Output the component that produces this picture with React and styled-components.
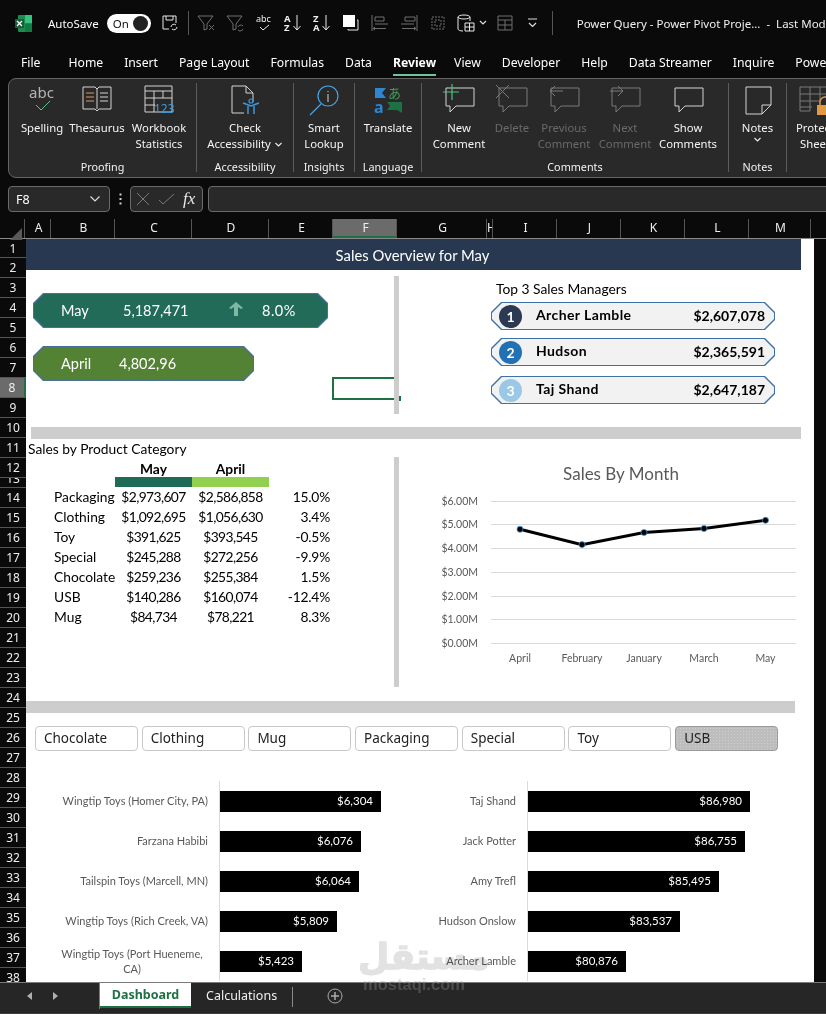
import React from "react";
import styled, { createGlobalStyle } from "styled-components";

const GlobalStyle = createGlobalStyle`
  html, body { margin: 0; padding: 0; background: #0a0a0a; }
  * { box-sizing: border-box; }
`;

const columns = [
  ["A", 26], ["B", 64], ["C", 77], ["D", 77], ["E", 64], ["F", 64], ["G", 90],
  ["H", 6], ["I", 64], ["J", 64], ["K", 64], ["L", 64], ["M", 62],
];

const rowHeights = [19, 20, 20, 20, 20, 20, 20, 20, 20, 20, 20, 20, 10, 20, 20, 20, 20, 20, 20, 20, 20, 20, 20, 20, 20, 20, 20, 20, 20, 20, 20, 20, 20, 20, 20, 20, 20, 20];

const tabs = ["File", "Home", "Insert", "Page Layout", "Formulas", "Data", "Review", "View", "Developer", "Help", "Data Streamer", "Inquire", "Power Pivot"];

const categories = [
  ["Packaging", "$2,973,607", "$2,586,858", "15.0%"],
  ["Clothing", "$1,092,695", "$1,056,630", "3.4%"],
  ["Toy", "$391,625", "$393,545", "-0.5%"],
  ["Special", "$245,288", "$272,256", "-9.9%"],
  ["Chocolate", "$259,236", "$255,384", "1.5%"],
  ["USB", "$140,286", "$160,074", "-12.4%"],
  ["Mug", "$84,734", "$78,221", "8.3%"],
];

const managers = [
  { n: 1, name: "Archer Lamble", value: "$2,607,078", color: "#2b3a52", mb: 8 },
  { n: 2, name: "Hudson", value: "$2,365,591", color: "#2271b5", mb: 10 },
  { n: 3, name: "Taj Shand", value: "$2,647,187", color: "#9cc8e8", mb: 0 },
];

const slicers = ["Chocolate", "Clothing", "Mug", "Packaging", "Special", "Toy", "USB"];

const customers = [
  ["Wingtip Toys (Homer City, PA)", 161, "$6,304"],
  ["Farzana Habibi", 141, "$6,076"],
  ["Tailspin Toys (Marcell, MN)", 139, "$6,064"],
  ["Wingtip Toys (Rich Creek, VA)", 117, "$5,809"],
  ["Wingtip Toys (Port Hueneme, CA)", 82, "$5,423"],
];

const people = [
  ["Taj Shand", 222, "$86,980"],
  ["Jack Potter", 217, "$86,755"],
  ["Amy Trefl", 191, "$85,495"],
  ["Hudson Onslow", 152, "$83,537"],
  ["Archer Lamble", 98, "$80,876"],
];

const months = [
  ["April", 520, 529.3],
  ["February", 582, 544.6],
  ["January", 644, 532.5],
  ["March", 704, 528.5],
  ["May", 765.5, 520.3],
];

const gridLines = [
  ["$6.00M", 501.5], ["$5.00M", 524.5], ["$4.00M", 548.5], ["$3.00M", 572.5],
  ["$2.00M", 596.5], ["$1.00M", 619.5], ["$0.00M", 643.5],
];

const Page = styled.div`
  position: relative;
  width: 826px;
  height: 1014px;
  overflow: hidden;
  display: flex;
  flex-direction: column;
  background: #0a0a0a;
  color: #fff;
  font-family: "Noto Sans", "Open Sans", sans-serif;
`;

const TitleBar = styled.div`
  height: 46px;
  flex: none;
  display: flex;
  align-items: center;
  padding-left: 15px;
  font-size: 12px;
  white-space: nowrap;
  svg { flex: none; }
`;

const AutoSaveLabel = styled.span`
  margin-left: 16px;
  flex: none;
  font-size: 11.5px;
`;

const Toggle = styled.div`
  width: 44px;
  height: 19px;
  margin-left: 8px;
  margin-right: 5px;
  padding: 0 3px 0 6px;
  flex: none;
  border-radius: 10px;
  background: #fff;
  color: #111;
  display: flex;
  align-items: center;
  justify-content: space-between;
  font-size: 11.5px;
`;

const ToggleKnob = styled.i`
  width: 15px;
  height: 15px;
  border-radius: 50%;
  background: #222;
`;

const QuickSlot = styled.div`
  width: ${(p) => p.$w || 29}px;
  height: 20px;
  display: flex;
  align-items: center;
  justify-content: center;
  flex: none;
`;

const TitleDivider = styled.i`
  width: 1px;
  height: 24px;
  flex: none;
  margin: 0 ${(p) => p.$gap || 4}px;
  background: #555;
`;

const DocTitle = styled.span`
  margin-left: 17px;
  flex: none;
  font-size: 11.5px;
  color: #f0f0f0;
`;

const TabBar = styled.div`
  height: 32px;
  flex: none;
  display: flex;
  gap: 21px;
  padding: 7px 0 0 21px;
  font-size: 12.2px;
  white-space: nowrap;
`;

const Tab = styled.div`
  line-height: 20px;
  flex: none;
  font-weight: ${(p) => (p.$active ? 700 : 400)};
  margin-right: ${(p) => (p.$first ? 7 : p.$active ? -3 : 0)}px;
  border-bottom: ${(p) => (p.$active ? "2px solid #6fc39a" : "none")};
  height: ${(p) => (p.$active ? 23 : 20)}px;
`;

const Ribbon = styled.div`
  height: 100px;
  margin-left: 8px;
  width: 840px;
  flex: none;
  display: flex;
  background: #292929;
  border: 1px solid #666;
  border-radius: 8px;
`;

const Group = styled.div`
  width: ${(p) => p.$w}px;
  flex: none;
  display: flex;
  flex-direction: column;
`;

const GroupButtons = styled.div`
  flex: 1;
  display: flex;
  padding-left: ${(p) => p.$pad || 0}px;
`;

const GroupLabel = styled.div`
  height: 19px;
  line-height: 17px;
  text-align: center;
  font-size: 10.8px;
  color: #f2f2f2;
`;

const GroupDivider = styled.i`
  width: 1px;
  flex: none;
  margin: 4px 0 5px;
  background: #5c5c5c;
`;

const RibbonButton = styled.div`
  width: ${(p) => p.$w}px;
  flex: none;
  display: flex;
  flex-direction: column;
  align-items: center;
  padding-top: 5px;
  text-align: center;
  font-size: 11.3px;
  line-height: 16px;
  white-space: nowrap;
  color: ${(p) => (p.$off ? "#6a6a6a" : "#f4f4f4")};
`;

const RibbonIcon = styled.div`
  height: 36px;
  display: flex;
  align-items: flex-start;
  justify-content: center;
`;

const FormulaRow = styled.div`
  height: 26px;
  margin-top: 8px;
  margin-left: 8px;
  width: 860px;
  display: flex;
  align-items: stretch;
  flex: none;
`;

const NameBox = styled.div`
  width: 102px;
  padding: 0 8px 0 7px;
  display: flex;
  align-items: center;
  justify-content: space-between;
  font-size: 12.5px;
  background: #292929;
  border: 1px solid #6a6a6a;
  border-radius: 4px;
`;

const Dots = styled.div`
  width: 20px;
  display: flex;
  align-items: center;
  justify-content: center;
`;

const FxBox = styled.div`
  width: 73px;
  display: flex;
  align-items: center;
  gap: 7px;
  padding-left: 5px;
  background: #292929;
  border: 1px solid #6a6a6a;
  border-radius: 4px;
`;

const FormulaInput = styled.div`
  flex: 1;
  margin-left: 5px;
  background: #292929;
  border: 1px solid #6a6a6a;
  border-radius: 4px;
`;

const ColumnBar = styled.div`
  height: 20px;
  margin-top: 7px;
  display: flex;
  flex: none;
  border-bottom: 1px solid #8a8a8a;
`;

const Corner = styled.div`
  width: 25px;
  flex: none;
  padding: 4px 0 0 10px;
  border-right: 1px solid #555;
`;

const ColumnCell = styled.div`
  width: ${(p) => p.$w}px;
  flex: none;
  overflow: hidden;
  padding-left: ${(p) => (p.$w > 6 ? 2 : 0)}px;
  text-align: center;
  font-size: 12px;
  line-height: 18px;
  color: #eee;
  border-right: 1px solid #555;
  background: ${(p) => (p.$selected ? "#6b6b6b" : "transparent")};
  border-bottom: ${(p) => (p.$selected ? "2px solid #1e7145" : "none")};
`;

const SheetArea = styled.div`
  height: 743px;
  display: flex;
  flex: none;
  overflow: hidden;
`;

const RowBar = styled.div`
  width: 26px;
  flex: none;
`;

const RowCell = styled.div`
  height: ${(p) => p.$h}px;
  overflow: hidden;
  text-align: center;
  font-size: 12px;
  line-height: ${(p) => (p.$h > 10 ? 19 : 2)}px;
  color: #eee;
  border-bottom: 1px solid #555;
  background: ${(p) => (p.$selected ? "#6b6b6b" : "transparent")};
  border-right: ${(p) => (p.$selected ? "2px solid #1e7145" : "none")};
`;

const Canvas = styled.div`
  position: relative;
  width: 788px;
  flex: none;
  background: #fff;
  color: #000;
  font-family: Lato, "Liberation Sans", sans-serif;
  font-size: 13.8px;
`;

const Banner = styled.div`
  width: 775px;
  height: 31px;
  padding-right: 2px;
  display: flex;
  align-items: center;
  justify-content: center;
  background: #283850;
  color: #fff;
  font-size: 14.8px;
`;

const TopSection = styled.div`
  height: 157px;
  display: flex;
`;

const KpiColumn = styled.div`
  width: 368px;
  flex: none;
  padding: 23px 0 0 7px;
  display: flex;
  flex-direction: column;
  gap: 18px;
`;

const snip = "polygon(10px 0, calc(100% - 10px) 0, 100% 10px, 100% calc(100% - 10px), calc(100% - 10px) 100%, 10px 100%, 0 calc(100% - 10px), 0 10px)";

const KpiFrame = styled.div`
  width: ${(p) => p.$w}px;
  height: 35px;
  padding: 1px;
  background: #4a6f9a;
  clip-path: ${snip};
`;

const KpiBody = styled.div`
  height: 100%;
  padding-left: 27px;
  display: flex;
  align-items: center;
  background: ${(p) => p.$bg};
  color: #fff;
  font-size: 14.5px;
  clip-path: ${snip};
`;

const KpiText = styled.span`
  width: ${(p) => p.$w}px;
  flex: none;
`;

const KpiPercent = styled.span`
  flex: none;
  letter-spacing: 0.5px;
`;

const VerticalRule = styled.div`
  position: relative;
  z-index: 1;
  width: 5px;
  height: ${(p) => p.$h}px;
  margin-top: ${(p) => p.$top}px;
  flex: none;
  background: #cdcdcd;
`;

const ManagersColumn = styled.div`
  padding: 11px 0 0 92px;
`;

const ManagersTitle = styled.div`
  height: 21px;
  line-height: 16px;
  padding-left: 5px;
`;

const ManagerFrame = styled.div`
  width: 284px;
  height: 28px;
  padding: 1px;
  margin-bottom: ${(p) => p.$mb}px;
  background: #3f71a6;
  clip-path: ${snip};
`;

const ManagerBody = styled.div`
  height: 100%;
  padding: 0 9px 0 7px;
  display: flex;
  align-items: center;
  background: #f2f2f2;
  font-weight: 700;
  font-size: 14px;
  clip-path: ${snip};
`;

const RankBadge = styled.div`
  width: 23px;
  height: 23px;
  flex: none;
  border-radius: 50%;
  text-align: center;
  line-height: 23px;
  background: ${(p) => p.$color};
  color: #fff;
`;

const ManagerName = styled.span`
  flex: 1;
  margin: 0 0 3px 14px;
  letter-spacing: 0.4px;
`;

const ManagerValue = styled.span`
  margin-bottom: 2px;
`;

const HorizontalRule = styled.div`
  width: ${(p) => p.$w}px;
  height: 12px;
  margin-left: ${(p) => p.$left}px;
  background: #cdcdcd;
`;

const MiddleSection = styled.div`
  height: 262px;
  display: flex;
`;

const TableColumn = styled.div`
  width: 368px;
  flex: none;
  padding-left: 2px;
`;

const TableTitle = styled.div`
  height: 18px;
  line-height: 20px;
`;

const CategoryTable = styled.div`
  display: grid;
  grid-template-columns: 61px 77px 77px 61px;
  grid-template-rows: 20px 10px;
  grid-auto-rows: 20px;
  padding-left: 26px;
  align-items: center;
`;

const HeadCell = styled.div`
  height: 20px;
  line-height: 24px;
  text-align: center;
  font-weight: 700;
`;

const ColorStrip = styled.div`
  height: 10px;
  align-self: start;
  background: ${(p) => p.$color};
`;

const LabelCell = styled.div`
  padding-bottom: 2px;
  white-space: nowrap;
`;

const MoneyCell = styled.div`
  padding-bottom: 2px;
  text-align: center;
  letter-spacing: -0.6px;
`;

const PercentCell = styled.div`
  padding-bottom: 2px;
  text-align: right;
  letter-spacing: -0.2px;
`;

const LineChartSvg = styled.svg`
  width: 410px;
  height: 262px;
  flex: none;
  font-family: Lato, "Liberation Sans", sans-serif;
`;

const SlicerRow = styled.div`
  display: flex;
  gap: 3.8px;
  padding: 13px 0 0 9px;
`;

const Slicer = styled.div`
  width: 102.9px;
  height: 25px;
  padding-left: 8px;
  flex: none;
  line-height: 23px;
  font-family: "Noto Sans", sans-serif;
  font-size: 13.5px;
  color: #222;
  border: 1px solid ${(p) => (p.$active ? "#9a9a9a" : "#c8c8c8")};
  border-radius: 4px;
  background-color: ${(p) => (p.$active ? "#bdbdbd" : "#fff")};
  background-image: ${(p) => (p.$active ? "radial-gradient(#cfcfcf 0.6px, transparent 0.8px)" : "none")};
  background-size: 3px 3px;
`;

const ChartsRow = styled.div`
  display: grid;
  grid-template-columns: 308px 308px;
  margin-top: 30px;
`;

const BarChart = styled.div`
  display: flex;
  flex-direction: column;
`;

const BarRow = styled.div`
  height: 40px;
  display: flex;
  align-items: center;
`;

const BarLabel = styled.div`
  width: 182px;
  flex: none;
  padding-left: 30px;
  margin-bottom: ${(p) => (p.$wrap ? 0 : 2)}px;
  text-align: ${(p) => (p.$wrap ? "center" : "right")};
  font-size: 11px;
  line-height: 15px;
  color: #595959;
`;

const BarTrack = styled.div`
  height: 100%;
  margin-left: 11px;
  flex: 1;
  display: flex;
  align-items: center;
  border-left: 1px solid #d9d9d9;
`;

const Bar = styled.div`
  height: 21px;
  padding: 0 8px 1px 0;
  display: flex;
  align-items: center;
  justify-content: flex-end;
  background: #000;
  color: #fff;
  font-size: 11.5px;
`;

const SheetTabs = styled.div`
  height: 32px;
  flex: none;
  display: flex;
  align-items: flex-start;
  background: #262626;
  border-top: 1px solid #7a7a7a;
  border-bottom: 1px solid #3c3c3c;
  font-size: 12.5px;
`;

const TabArrows = styled.div`
  width: 100px;
  height: 26px;
  padding-left: 27px;
  display: flex;
  align-items: center;
  gap: 21px;
  border-right: 1px solid #7a7a7a;
`;

const SheetTab = styled.div`
  width: 91px;
  height: 25px;
  line-height: 24px;
  text-align: center;
  font-weight: 700;
  background: #fff;
  color: #1e7145;
  border-bottom: 2px solid #1e7145;
`;

const PlainSheetTab = styled.div`
  width: 101px;
  height: 26px;
  line-height: 26px;
  padding-left: 15px;
  color: #f0f0f0;
`;

const TabDivider = styled.i`
  width: 1px;
  height: 20px;
  margin-top: 4px;
  background: #8a8a8a;
`;

const AddSheet = styled.div`
  margin: 5px 0 0 34px;
  display: flex;
`;

const CellCursor = styled.div`
  position: absolute;
  left: 306px;
  top: 138px;
  width: 65px;
  height: 23px;
  border: 2px solid #1e7145;
`;

const CursorHandle = styled.i`
  position: absolute;
  z-index: 2;
  left: 373px;
  top: 157px;
  width: 2px;
  height: 5px;
  background: #1e7145;
`;

const Watermark = styled.div`
  position: absolute;
  left: 358px;
  top: 937px;
  width: 112px;
  text-align: center;
  font-family: "DejaVu Sans", sans-serif;
  pointer-events: none;
`;

const WatermarkArabic = styled.div`
  font-size: 36px;
  line-height: 40px;
  font-weight: 700;
  color: #e2e2e2;
  -webkit-text-stroke: 1.5px #e2e2e2;
  mix-blend-mode: multiply;
`;

const WatermarkLatin = styled.div`
  font-family: "Liberation Sans", sans-serif;
  font-size: 16.5px;
  line-height: 14px;
  font-weight: 700;
  color: rgba(150, 150, 150, 0.35);
`;

const QuickIcon = ({ kind }) => {
  const s = { fill: "none", stroke: "#e8e8e8", strokeWidth: 1 };
  const off = { fill: "none", stroke: "#6e6e6e", strokeWidth: 1 };
  if (kind === "save")
    return (
      <svg width="18" height="18" viewBox="0 0 18 18">
        <path d="M2 2h13v7M2 2v13h6M5 2v4h7V2" {...s} />
        <path d="M10 13a3 3 0 0 1 5-2M16 13a3 3 0 0 1-5 2" {...s} />
      </svg>
    );
  if (kind === "filterX" || kind === "filterR")
    return (
      <svg width="18" height="18" viewBox="0 0 18 18">
        <path d="M1 2h15l-6 8v5l-3 1v-6z" {...off} />
        {kind === "filterX" ? <path d="M12 11l5 5M17 11l-5 5" {...off} /> : <path d="M12 13a3 3 0 0 1 5-1M17 15a3 3 0 0 1-5 1" {...off} />}
      </svg>
    );
  if (kind === "abc")
    return (
      <svg width="18" height="18" viewBox="0 0 18 18">
        <text x="1" y="8" fontSize="9" fill="#eee" fontFamily="Noto Sans">abc</text>
        <path d="M5 13l3 3 6-5" {...s} />
      </svg>
    );
  if (kind === "az" || kind === "za")
    return (
      <svg width="18" height="20" viewBox="0 0 18 20">
        <text x="0" y="9" fontSize="9.5" fontWeight="700" fill="#eee" fontFamily="Noto Sans">{kind === "az" ? "A" : "Z"}</text>
        <text x="0" y="18" fontSize="9.5" fontWeight="700" fill="#eee" fontFamily="Noto Sans">{kind === "az" ? "Z" : "A"}</text>
        <path d="M13 2v15M9.5 13l3.5 4 3.5-4" {...s} />
      </svg>
    );
  if (kind === "square")
    return (
      <svg width="18" height="18" viewBox="0 0 18 18">
        <rect x="1" y="1" width="12" height="12" fill="#fff" />
        <path d="M15 6h1v10H6v-1" {...s} />
      </svg>
    );
  if (kind === "alignL")
    return (
      <svg width="18" height="18" viewBox="0 0 18 18">
        <path d="M1 1v16M4 3h9v4H4zM4 10h13M4 13l-2 1.5 2 1.5M2 14.500h13" {...off} />
      </svg>
    );
  if (kind === "alignR")
    return (
      <svg width="18" height="18" viewBox="0 0 18 18">
        <path d="M17 1v16M5 3h10v4H5zM1 10h13M14 13l2 1.500-2 1.500M2 14.500h13" {...off} />
      </svg>
    );
  if (kind === "group")
    return (
      <svg width="18" height="18" viewBox="0 0 18 18">
        <path d="M3 3h12v12H3zM6 6h6v6H6z" {...off} strokeDasharray="2 1" />
      </svg>
    );
  if (kind === "cylinder")
    return (
      <svg width="18" height="18" viewBox="0 0 18 18">
        <ellipse cx="7" cy="3" rx="6" ry="2" {...s} />
        <path d="M1 3v12c0 1 2 2 5 2M13 3v4" {...s} />
        <path d="M8 9h9v8H8zM8 13h9M12.500 9v8" {...s} />
      </svg>
    );
  if (kind === "table")
    return (
      <svg width="16" height="16" viewBox="0 0 16 16">
        <path d="M1 1h14v14H1zM1 5h14M1 10h14M8 5v10" {...off} />
      </svg>
    );
  if (kind === "chev")
    return (
      <svg width="10" height="8" viewBox="0 0 10 8">
        <path d="M2 2l3 3 3-3" fill="none" stroke="#ddd" strokeWidth="1.200" />
      </svg>
    );
  return (
    <svg width="12" height="12" viewBox="0 0 12 12">
      <path d="M1 2h9M2 6l3.500 3.500L9 6" fill="none" stroke="#ddd" strokeWidth="1.200" />
    </svg>
  );
};

const stroke = { fill: "none", stroke: "#d4d4d4", strokeWidth: 1 };
const muted = { fill: "none", stroke: "#7a7a7a", strokeWidth: 1 };
const Bubble = ({ p = stroke, w = 28 }) => (
  <path d={`M4 4h${w}v18H14l-6 6v-6H4z`} {...p} />
);

const SpellingIcon = () => (
  <svg width="32" height="32" viewBox="0 0 32 32">
    <text x="3" y="14" fontSize="15" fill="#b4b4b4" fontFamily="Noto Sans">abc</text>
    <path d="M10 21l5 5 9-9" fill="none" stroke="#5fc08a" strokeWidth="1" />
  </svg>
);

const ThesaurusIcon = () => (
  <svg width="32" height="32" viewBox="0 0 32 32">
    <path d="M2 3h12l2 2 2-2h12v22H18l-2 2-2-2H2zM16 5v20" {...stroke} />
    <path d="M5 9h8M5 13h8M5 17h8" fill="none" stroke="#d79a5a" />
    <path d="M19 9h8M19 13h8M19 17h8" {...stroke} />
  </svg>
);

const StatsIcon = () => (
  <svg width="32" height="32" viewBox="0 0 32 32">
    <path d="M2 2h27v26H2zM2 7h27M2 14h27M2 21h10M11 7v21M20 7v7" {...stroke} />
    <text x="11" y="29" fontSize="12" fill="#3d9be0" fontFamily="Noto Sans">123</text>
  </svg>
);

const AccessIcon = () => (
  <svg width="34" height="34" viewBox="0 0 34 34">
    <path d="M4 2h14l7 7v9M18 2v7h7M4 2v27h12" {...stroke} />
    <circle cx="23" cy="17" r="2" fill="none" stroke="#3f97dc" strokeWidth="1.200" />
    <path d="M15 19l8 3 8-3M20 22v8M26 22v8" fill="none" stroke="#3f97dc" strokeWidth="1.500" />
  </svg>
);

const LookupIcon = () => (
  <svg width="34" height="34" viewBox="0 0 34 34">
    <circle cx="21" cy="12" r="10" fill="none" stroke="#4aa3e6" strokeWidth="1.200" />
    <path d="M14 20L3 31" fill="none" stroke="#4aa3e6" strokeWidth="1.200" />
    <path d="M21 7v1M21 10v8" {...stroke} />
  </svg>
);

const TranslateIcon = () => (
  <svg width="32" height="32" viewBox="0 0 32 32">
    <path d="M3 4h11l-4 5 4 5H3z" fill="#2e86d0" />
    <text x="2" y="29" fontSize="16" fontWeight="700" fill="#2e86d0" fontFamily="Noto Sans">a</text>
    <text x="16" y="14" fontSize="13" fill="#3f9d55" fontFamily="Noto Sans CJK JP">あ</text>
    <path d="M15 18h15v11l-5-3H15l3-4z" fill="#1e7145" />
  </svg>
);

const NewCommentIcon = () => (
  <svg width="34" height="32" viewBox="0 0 34 32">
    <Bubble />
    <path d="M10 0v16M1 8h16" fill="none" stroke="#4fc37f" strokeWidth="1.200" />
  </svg>
);

const DeleteIcon = () => (
  <svg width="34" height="32" viewBox="0 0 34 32">
    <Bubble p={muted} />
    <path d="M1 1l13 13M14 1L1 14" {...muted} />
  </svg>
);

const PrevIcon = () => (
  <svg width="34" height="32" viewBox="0 0 34 32">
    <Bubble p={muted} />
    <path d="M16 7H3M8 2L3 7l5 5" {...muted} />
  </svg>
);

const NextIcon = () => (
  <svg width="34" height="32" viewBox="0 0 34 32">
    <Bubble p={muted} />
    <path d="M2 7h13M10 2l5 5-5 5" {...muted} />
  </svg>
);

const ShowIcon = () => (
  <svg width="34" height="32" viewBox="0 0 34 32">
    <Bubble />
  </svg>
);

const NotesIcon = () => (
  <svg width="30" height="32" viewBox="0 0 30 32">
    <path d="M3 3h25v18l-9 9H3zM28 21h-9v9" {...stroke} />
  </svg>
);

const ProtectIcon = () => (
  <svg width="34" height="32" viewBox="0 0 34 32">
    <path d="M2 3h30M2 3v24h10M2 10h30M2 17h20M2 23h12M12 3v24M22 3v14M32 3v8" {...muted} />
    <path d="M22 22v-4a5 5 0 0 1 10 0v4" fill="none" stroke="#e09a45" strokeWidth="1.500" />
    <rect x="19" y="21" width="15" height="10" fill="#e09a45" />
  </svg>
);

const SmallChevron = () => (
  <svg width="9" height="7" viewBox="0 0 9 7">
    <path d="M1.500 2l3 3 3-3" fill="none" stroke="#eee" strokeWidth="1.100" />
  </svg>
);

const ExcelLogo = () => (
  <svg width="17" height="17" viewBox="0 0 17 17">
    <rect x="3" y="0" width="14" height="17" rx="1" fill="#1f8a50" />
    <path d="M10 0h7v8h-7z" fill="#33c481" />
    <path d="M10 9h7v8h-7z" fill="#107c41" />
    <rect x="0" y="4" width="9" height="9" fill="#185c37" />
    <path d="M2 6l5 5M7 6l-5 5" stroke="#fff" strokeWidth="1.300" />
  </svg>
);

const Ribbons = () => (
  <Ribbon>
    <Group $w={187}>
      <GroupButtons $pad={5}>
        <RibbonButton $w={56}>
          <RibbonIcon><SpellingIcon /></RibbonIcon>
          Spelling
        </RibbonButton>
        <RibbonButton $w={54}>
          <RibbonIcon><ThesaurusIcon /></RibbonIcon>
          Thesaurus
        </RibbonButton>
        <RibbonButton $w={70}>
          <RibbonIcon><StatsIcon /></RibbonIcon>
          Workbook<br />Statistics
        </RibbonButton>
      </GroupButtons>
      <GroupLabel>Proofing</GroupLabel>
    </Group>
    <GroupDivider />
    <Group $w={96}>
      <GroupButtons>
        <RibbonButton $w={96}>
          <RibbonIcon><AccessIcon /></RibbonIcon>
          Check
          <span>Accessibility <SmallChevron /></span>
        </RibbonButton>
      </GroupButtons>
      <GroupLabel>Accessibility</GroupLabel>
    </Group>
    <GroupDivider />
    <Group $w={60}>
      <GroupButtons>
        <RibbonButton $w={60}>
          <RibbonIcon><LookupIcon /></RibbonIcon>
          Smart<br />Lookup
        </RibbonButton>
      </GroupButtons>
      <GroupLabel>Insights</GroupLabel>
    </Group>
    <GroupDivider />
    <Group $w={66}>
      <GroupButtons>
        <RibbonButton $w={66}>
          <RibbonIcon><TranslateIcon /></RibbonIcon>
          Translate
        </RibbonButton>
      </GroupButtons>
      <GroupLabel>Language</GroupLabel>
    </Group>
    <GroupDivider />
    <Group $w={306}>
      <GroupButtons $pad={10}>
        <RibbonButton $w={54}>
          <RibbonIcon><NewCommentIcon /></RibbonIcon>
          New<br />Comment
        </RibbonButton>
        <RibbonButton $w={52} $off>
          <RibbonIcon><DeleteIcon /></RibbonIcon>
          Delete
        </RibbonButton>
        <RibbonButton $w={52} $off>
          <RibbonIcon><PrevIcon /></RibbonIcon>
          Previous<br />Comment
        </RibbonButton>
        <RibbonButton $w={70} $off>
          <RibbonIcon><NextIcon /></RibbonIcon>
          Next<br />Comment
        </RibbonButton>
        <RibbonButton $w={56}>
          <RibbonIcon><ShowIcon /></RibbonIcon>
          Show<br />Comments
        </RibbonButton>
      </GroupButtons>
      <GroupLabel>Comments</GroupLabel>
    </Group>
    <GroupDivider />
    <Group $w={57}>
      <GroupButtons>
        <RibbonButton $w={57}>
          <RibbonIcon><NotesIcon /></RibbonIcon>
          Notes
          <SmallChevron />
        </RibbonButton>
      </GroupButtons>
      <GroupLabel>Notes</GroupLabel>
    </Group>
    <GroupDivider />
    <Group $w={60}>
      <GroupButtons>
        <RibbonButton $w={56}>
          <RibbonIcon><ProtectIcon /></RibbonIcon>
          Protect<br />Sheet
        </RibbonButton>
      </GroupButtons>
    </Group>
  </Ribbon>
);

const LineChart = () => (
  <LineChartSvg viewBox="399 439 410 262">
    <text x="621" y="480" textAnchor="middle" fontSize="17" fill="#595959">Sales By Month</text>
    {gridLines.map(([label, y]) => (
      <g key={label}>
        <line x1="491" x2="796" y1={y} y2={y} stroke="#d9d9d9" />
        <text x="478" y={y + 3.5} textAnchor="end" fontSize="10.5" fill="#595959">{label}</text>
      </g>
    ))}
    <polyline points={months.map((m) => `${m[1]},${m[2]}`).join(" ")} fill="none" stroke="#000" strokeWidth="3" />
    {months.map(([label, x, y]) => (
      <g key={label}>
        <circle cx={x} cy={y} r="3" fill="#000" stroke="#3f97dc" strokeWidth="0.800" />
        <text x={x} y="662" textAnchor="middle" fontSize="10.5" fill="#595959">{label}</text>
      </g>
    ))}
  </LineChartSvg>
);

const App = () => {
  return (
    <Page>
      <GlobalStyle />
      <TitleBar>
        <ExcelLogo />
        <AutoSaveLabel>AutoSave</AutoSaveLabel>
        <Toggle>On<ToggleKnob /></Toggle>
        <QuickSlot><QuickIcon kind="save" /></QuickSlot>
        <TitleDivider $gap={3} />
        <QuickSlot><QuickIcon kind="filterX" /></QuickSlot>
        <QuickSlot><QuickIcon kind="filterR" /></QuickSlot>
        <QuickSlot><QuickIcon kind="abc" /></QuickSlot>
        <QuickSlot><QuickIcon kind="az" /></QuickSlot>
        <QuickSlot><QuickIcon kind="za" /></QuickSlot>
        <QuickSlot><QuickIcon kind="square" /></QuickSlot>
        <QuickSlot><QuickIcon kind="alignL" /></QuickSlot>
        <QuickSlot><QuickIcon kind="alignR" /></QuickSlot>
        <QuickSlot><QuickIcon kind="group" /></QuickSlot>
        <QuickSlot $w={26}><QuickIcon kind="cylinder" /></QuickSlot>
        <QuickSlot $w={9}><QuickIcon kind="chev" /></QuickSlot>
        <QuickSlot $w={34}><QuickIcon kind="table" /></QuickSlot>
        <QuickSlot $w={23}><QuickIcon kind="more" /></QuickSlot>
        <TitleDivider $gap={7} />
        <DocTitle>Power Query - Power Pivot Proje...&nbsp; -&nbsp; Last Modified: Just now</DocTitle>
      </TitleBar>

      <TabBar>
        {tabs.map((t, i) => (
          <Tab key={t} $first={i === 0} $active={t === "Review"}>{t}</Tab>
        ))}
      </TabBar>

      <Ribbons />

      <FormulaRow>
        <NameBox>
          F8
          <svg width="12" height="8" viewBox="0 0 12 8">
            <path d="M1.500 1.500L6 6l4.500-4.500" fill="none" stroke="#ddd" strokeWidth="1.200" />
          </svg>
        </NameBox>
        <Dots>
          <svg width="3" height="12" viewBox="0 0 3 12">
            <path d="M0.500 0.500h2v2h-2zM0.500 5h2v2h-2zM0.500 9.500h2v2h-2z" fill="#cfcfcf" />
          </svg>
        </Dots>
        <FxBox>
          <svg width="40" height="14" viewBox="0 0 40 14">
            <path d="M1 1l12 12M13 1L1 13" {...muted} />
            <path d="M23 8l4 4 11-10" {...muted} />
          </svg>
          <svg width="18" height="20" viewBox="0 0 18 20">
            <text x="0" y="15" fontSize="17" fontStyle="italic" fontFamily="Liberation Serif" fill="#e8e8e8">fx</text>
          </svg>
        </FxBox>
        <FormulaInput />
      </FormulaRow>

      <ColumnBar>
        <Corner>
          <svg width="12" height="12" viewBox="0 0 12 12">
            <path d="M12 0v12H0z" fill="#5a5a5a" />
          </svg>
        </Corner>
        {columns.map(([c, w]) => (
          <ColumnCell key={c} $w={w} $selected={c === "F"}>{c}</ColumnCell>
        ))}
      </ColumnBar>

      <SheetArea>
        <RowBar>
          {rowHeights.map((h, i) => (
            <RowCell key={i} $h={h} $selected={i === 7}>{i + 1}</RowCell>
          ))}
        </RowBar>

        <Canvas>
          <Banner>Sales Overview for May</Banner>

          <TopSection>
            <KpiColumn>
              <KpiFrame $w={295}>
                <KpiBody $bg="#226b58">
                  <KpiText $w={62}>May</KpiText>
                  <KpiText $w={105}>5,187,471</KpiText>
                  <KpiText $w={34}>
                    <svg width="16" height="14" viewBox="0 0 16 14">
                      <path d="M8 0l7 6-2 1-3-2v9H6V5L3 7 1 6z" fill="#7fb8a4" />
                    </svg>
                  </KpiText>
                  <KpiPercent>8.0%</KpiPercent>
                </KpiBody>
              </KpiFrame>
              <KpiFrame $w={221}>
                <KpiBody $bg="#548235">
                  <KpiText $w={58}>April</KpiText>
                  <KpiText $w={100}>4,802,96</KpiText>
                </KpiBody>
              </KpiFrame>
            </KpiColumn>
            <VerticalRule $h={138} $top={6} />
            <ManagersColumn>
              <ManagersTitle>Top 3 Sales Managers</ManagersTitle>
              {managers.map((m) => (
                <ManagerFrame key={m.n} $mb={m.mb}>
                  <ManagerBody>
                    <RankBadge $color={m.color}>{m.n}</RankBadge>
                    <ManagerName>{m.name}</ManagerName>
                    <ManagerValue>{m.value}</ManagerValue>
                  </ManagerBody>
                </ManagerFrame>
              ))}
            </ManagersColumn>
          </TopSection>

          <HorizontalRule $w={770} $left={5} />

          <MiddleSection>
            <TableColumn>
              <TableTitle>Sales by Product Category</TableTitle>
              <CategoryTable>
                <span />
                <HeadCell>May</HeadCell>
                <HeadCell>April</HeadCell>
                <span />
                <span />
                <ColorStrip $color="#1f6b57" />
                <ColorStrip $color="#92d14f" />
                <span />
                {categories.map(([name, may, april, pct]) => (
                  <React.Fragment key={name}>
                    <LabelCell>{name}</LabelCell>
                    <MoneyCell>{may}</MoneyCell>
                    <MoneyCell>{april}</MoneyCell>
                    <PercentCell>{pct}</PercentCell>
                  </React.Fragment>
                ))}
              </CategoryTable>
            </TableColumn>
            <VerticalRule $h={230} $top={18} />
            <LineChart />
          </MiddleSection>

          <HorizontalRule $w={769} $left={0} />

          <SlicerRow>
            {slicers.map((s) => (
              <Slicer key={s} $active={s === "USB"}>{s}</Slicer>
            ))}
          </SlicerRow>

          <ChartsRow>
            <BarChart>
              {customers.map(([name, w, value]) => (
                <BarRow key={name}>
                  <BarLabel $wrap={name.includes("Port")}>{name}</BarLabel>
                  <BarTrack><Bar style={{ width: w }}>{value}</Bar></BarTrack>
                </BarRow>
              ))}
            </BarChart>
            <BarChart>
              {people.map(([name, w, value]) => (
                <BarRow key={name}>
                  <BarLabel>{name}</BarLabel>
                  <BarTrack><Bar style={{ width: w }}>{value}</Bar></BarTrack>
                </BarRow>
              ))}
            </BarChart>
          </ChartsRow>

          <CellCursor />
          <CursorHandle />
        </Canvas>
      </SheetArea>

      <SheetTabs>
        <TabArrows>
          <svg width="5" height="8" viewBox="0 0 5 8"><path d="M5 0v8L0 4z" fill="#b0b0b0" /></svg>
          <svg width="5" height="8" viewBox="0 0 5 8"><path d="M0 0v8l5-4z" fill="#b0b0b0" /></svg>
        </TabArrows>
        <SheetTab>Dashboard</SheetTab>
        <PlainSheetTab>Calculations</PlainSheetTab>
        <TabDivider />
        <AddSheet>
          <svg width="16" height="16" viewBox="0 0 16 16">
            <circle cx="8" cy="8" r="7" fill="none" stroke="#aaa" />
            <path d="M8 4v8M4 8h8" stroke="#aaa" strokeWidth="1.500" />
          </svg>
        </AddSheet>
      </SheetTabs>

      <Watermark>
        <WatermarkArabic>مستقل</WatermarkArabic>
        <WatermarkLatin>mostaqi.com</WatermarkLatin>
      </Watermark>
    </Page>
  );
};

export default App;
